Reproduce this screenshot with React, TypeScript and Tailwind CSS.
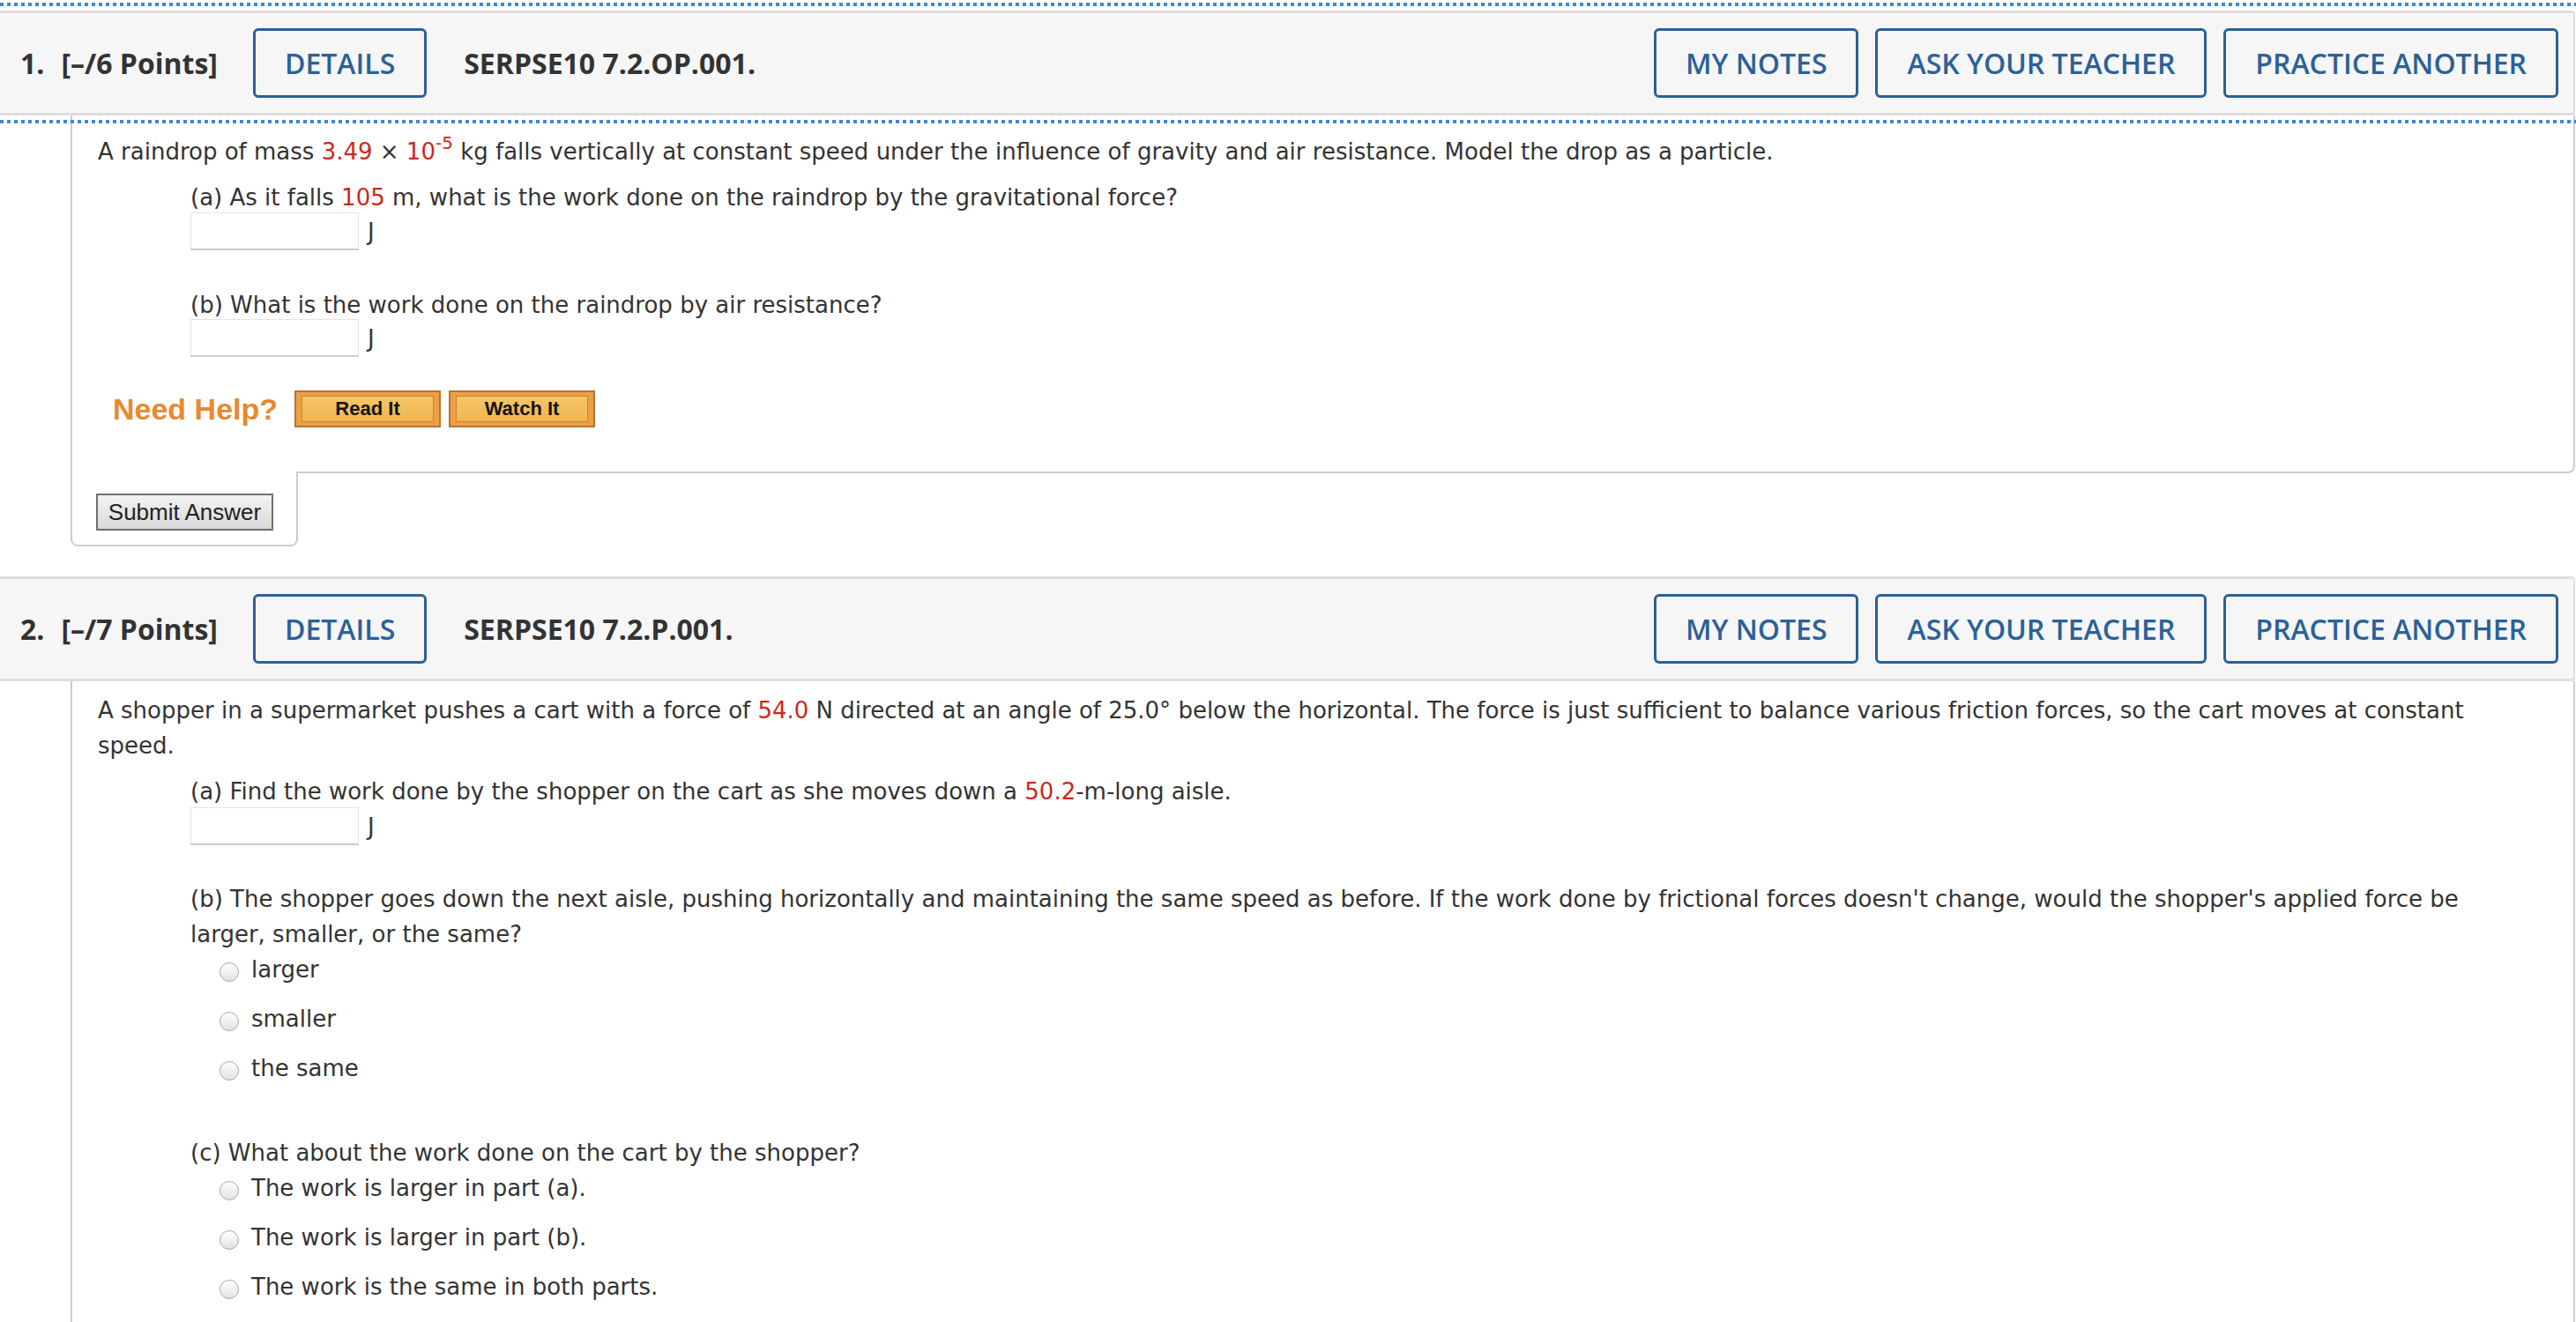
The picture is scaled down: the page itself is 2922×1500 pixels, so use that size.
import type { ReactNode } from "react";

const RED = "text-[#cc281e]";

function R({ children }: { children: ReactNode }) {
  return <span className={RED}>{children}</span>;
}

function HeaderButton({ label }: { label: string }) {
  return (
    <div className="flex h-[79px] items-center rounded-[6px] border-[3px] border-[#2b6198] px-[33px] font-semibold text-[#2b6198]">
      {label}
    </div>
  );
}

function QuestionHeader({
  num,
  points,
  code,
  focused,
}: {
  num: string;
  points: string;
  code: string;
  focused?: boolean;
}) {
  return (
    <div className="relative mr-[1px] flex h-[119px] items-center rounded-r-[4px] border-y-[3px] border-r-2 border-[#dedede] bg-[#f6f6f6] pl-[23px] pr-[17px] font-['Open_Sans',sans-serif] text-[32px] text-[#333333]">
      {focused && (
        <>
          <div className="absolute -top-[12px] left-0 right-[-3px] h-[4px] bg-[repeating-linear-gradient(90deg,#3f86e0_0px,#3f86e0_4px,transparent_4px,transparent_8px)]" />
          <div className="absolute -bottom-[12px] left-0 right-[-3px] h-[4px] bg-[repeating-linear-gradient(90deg,#3f86e0_0px,#3f86e0_4px,transparent_4px,transparent_8px)]" />
        </>
      )}
      <span className="font-bold">{num}</span>
      <span className="ml-[19px] font-bold">{points}</span>
      <div className="ml-[40px]">
        <HeaderButton label="DETAILS" />
      </div>
      <span className="ml-[42px] font-bold">{code}</span>
      <div className="flex-1" />
      <div className="flex gap-[19px]">
        <HeaderButton label="MY NOTES" />
        <HeaderButton label="ASK YOUR TEACHER" />
        <HeaderButton label="PRACTICE ANOTHER" />
      </div>
    </div>
  );
}

function AnswerInput({ shift }: { shift: string }) {
  return (
    <div className={`ml-[105px] flex items-center ${shift}`}>
      <div className="h-[43px] w-[191px] border border-b-2 border-[#e3e3e3] border-b-[#cbcbcb] bg-white" />
      <span className="ml-[10px]">J</span>
    </div>
  );
}

function Radio({ label, last }: { label: string; last?: boolean }) {
  return (
    <div className={`ml-[138px] flex h-[40px] items-start ${last ? "" : "mb-[16px]"}`}>
      <span className="mt-[12px] h-[22px] w-[22px] shrink-0 rounded-full border border-[#a9a9a9] bg-gradient-to-b from-white to-[#e2e2e2]" />
      <span className="ml-[14px]">{label}</span>
    </div>
  );
}

function HelpButton({ label }: { label: string }) {
  return (
    <div className="h-[42px] w-[166px] border-2 border-[#b27638] bg-[#ee9f45] px-[6px] py-[4px]">
      <div className="flex h-full items-center justify-center border border-[#c4843c] bg-gradient-to-b from-[#f5c766] to-[#f0b64f] text-[22px] font-bold leading-none text-[#141414]">
        {label}
      </div>
    </div>
  );
}

export default function App() {
  return (
    <div className="h-[1500px] overflow-hidden bg-white pt-[12px] font-['DejaVu_Sans',Verdana,sans-serif] text-[26px] leading-[40px] text-[#333333]">
      {/* question 1 */}
      <QuestionHeader num="1." points="[–/6 Points]" code="SERPSE10 7.2.OP.001." focused />
      <div className="ml-[80px] mr-[1px] rounded-br-[8px] border-x-2 border-b-2 border-[#cccccc] pb-[50px] pl-[29px] pr-[68px] pt-[21px]">
        <p>
          A raindrop of mass <R>3.49</R> × <R>10<sup className="-top-[0.6em] text-[20px]">-5</sup></R> kg falls
          vertically at constant speed under the influence of gravity and air resistance. Model the drop as a
          particle.
        </p>
        <p className="ml-[105px] mt-[12px]">
          (a) As it falls <R>105</R> m, what is the work done on the raindrop by the gravitational force?
        </p>
        <AnswerInput shift="-mt-[3px]" />
        <p className="ml-[105px] mt-[42px]">(b) What is the work done on the raindrop by air resistance?</p>
        <AnswerInput shift="-mt-[4px]" />
        <div className="ml-[17px] mt-[38px] flex h-[42px] items-center font-['Liberation_Sans',Arial,sans-serif] leading-none">
          <span className="mr-[19px] text-[34px] font-bold text-[#e8892f]">Need Help?</span>
          <HelpButton label="Read It" />
          <div className="w-[9px]" />
          <HelpButton label="Watch It" />
        </div>
      </div>
      <div className="relative -mt-[2px] ml-[80px] w-[258px] rounded-b-[8px] border-x-2 border-b-2 border-[#cccccc] bg-white pb-[16px] pl-[27px] pt-[25px]">
        <button className="flex h-[42px] w-[201px] items-center justify-center border-2 border-[#6e6e6e] bg-gradient-to-b from-[#f3f3f3] to-[#d9d9d9] font-['Liberation_Sans',Arial,sans-serif] text-[26px] leading-none text-[#222222]">
          Submit Answer
        </button>
      </div>

      {/* question 2 */}
      <div className="mt-[34px]">
        <QuestionHeader num="2." points="[–/7 Points]" code="SERPSE10 7.2.P.001." />
      </div>
      <div className="ml-[80px] mr-[1px] border-x-2 border-[#cccccc] pb-[120px] pl-[29px] pr-[68px] pt-[13px]">
        <p>
          A shopper in a supermarket pushes a cart with a force of <R>54.0</R> N directed at an angle of 25.0° below
          the horizontal. The force is just sufficient to balance various friction forces, so the cart moves at
          constant speed.
        </p>
        <p className="ml-[105px] mt-[12px]">
          (a) Find the work done by the shopper on the cart as she moves down a <R>50.2</R>-m-long aisle.
        </p>
        <AnswerInput shift="-mt-[2px]" />
        <p className="ml-[105px] mt-[41px]">
          (b) The shopper goes down the next aisle, pushing horizontally and maintaining the same speed as before. If
          the work done by frictional forces doesn't change, would the shopper's applied force be larger, smaller, or
          the same?
        </p>
        <Radio label="larger" />
        <Radio label="smaller" />
        <Radio label="the same" last />
        <p className="ml-[105px] mt-[56px]">(c) What about the work done on the cart by the shopper?</p>
        <Radio label="The work is larger in part (a)." />
        <Radio label="The work is larger in part (b)." />
        <Radio label="The work is the same in both parts." last />
      </div>
    </div>
  );
}
